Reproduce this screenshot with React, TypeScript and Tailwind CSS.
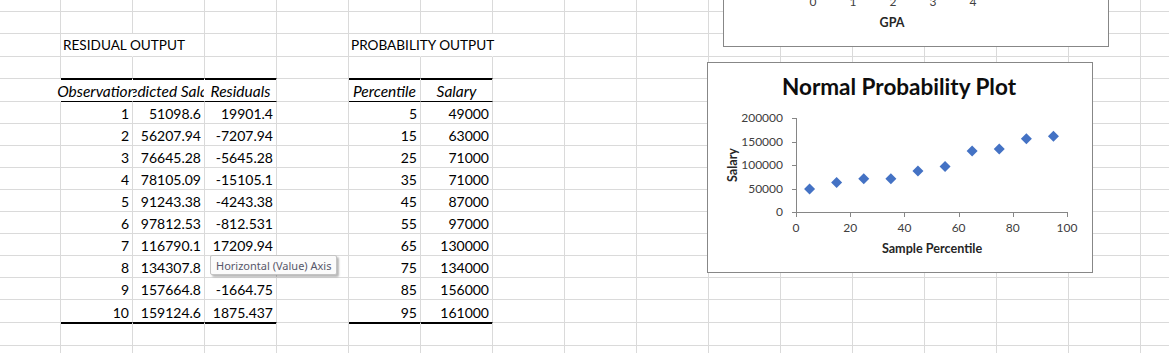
import React from "react";

// row heights follow the sheet's gridlines (y = 11, 33, 56, 78, 101 ...)
const ROW_H = [12, 22, 23, 22, 23, 22, 22, 22, 22, 22, 22, 22, 22, 22, 23, 23, 20];
const COL_W = [61, 72, 72, 72, 72, 72, 72, 72, 72, 72, 72, 72, 72, 72, 72, 72, 60];

const H_CLS: Record<number, string> = {
  12: "h-[12px]",
  20: "h-[20px]",
  22: "h-[22px]",
  23: "h-[23px]",
};
const W_CLS: Record<number, string> = {
  60: "w-[60px]",
  61: "w-[61px]",
  72: "w-[72px]",
};

const RESIDUALS: [string, string, string][] = [
  ["1", "51098.6", "19901.4"],
  ["2", "56207.94", "-7207.94"],
  ["3", "76645.28", "-5645.28"],
  ["4", "78105.09", "-15105.1"],
  ["5", "91243.38", "-4243.38"],
  ["6", "97812.53", "-812.531"],
  ["7", "116790.1", "17209.94"],
  ["8", "134307.8", "-4307.8"],
  ["9", "157664.8", "-1664.75"],
  ["10", "159124.6", "1875.437"],
];

const PROBABILITY: [number, number][] = [
  [5, 49000],
  [15, 63000],
  [25, 71000],
  [35, 71000],
  [45, 87000],
  [55, 97000],
  [65, 130000],
  [75, 134000],
  [85, 156000],
  [95, 161000],
];

const TABLE_COLS = [1, 2, 3, 5, 6];

type CellSpec = {
  text?: string;
  kind?: "title" | "head" | "num";
  extra?: string;
};

function cellAt(r: number, c: number): CellSpec {
  const inTable = TABLE_COLS.includes(c);
  if (r === 2) {
    // titles spill over the empty cells to their right
    if (c === 1) return { text: "RESIDUAL OUTPUT", kind: "title", extra: "border-r-transparent overflow-visible" };
    if (c === 5) return { text: "PROBABILITY OUTPUT", kind: "title", extra: "border-r-transparent overflow-visible" };
    if (c === 6) return { extra: "border-r-transparent" };
  }
  if (r === 3 && inTable) return { extra: "border-b-black" };
  if (r === 4) {
    const heads: Record<number, string> = {
      1: "Observation",
      2: "Predicted Salary",
      3: "Residuals",
      5: "Percentile",
      6: "Salary",
    };
    if (c === 0) return { extra: "border-r-transparent" };
    if (c === 1)
      return {
        text: heads[1],
        kind: "head",
        extra: "border-b-black border-r-transparent shadow-[inset_0_1px_0_#000] overflow-visible [clip-path:inset(0_0_0_-12px)]",
      };
    if (c === 2)
      return {
        text: heads[2],
        kind: "head",
        extra: "border-b-black border-r-transparent shadow-[inset_0_1px_0_#000]",
      };
    if (inTable)
      return { text: heads[c], kind: "head", extra: "border-b-black shadow-[inset_0_1px_0_#000]" };
  }
  if (r >= 5 && r <= 14) {
    const i = r - 5;
    const last = r === 14 ? "border-b-black" : "";
    if (c >= 1 && c <= 3) return { text: RESIDUALS[i][c - 1], kind: "num", extra: last };
    if (c === 5) return { text: String(PROBABILITY[i][0]), kind: "num", extra: last };
    if (c === 6) return { text: String(PROBABILITY[i][1]), kind: "num", extra: last };
  }
  if (r === 15 && inTable) return { extra: "shadow-[inset_0_1px_0_#000]" };
  return {};
}

function Cell({ r, c }: { r: number; c: number }) {
  const spec = cellAt(r, c);
  const align =
    spec.kind === "num"
      ? "justify-end pr-[3px] pb-[1px] text-[14px]"
      : spec.kind === "head"
      ? "justify-center italic pb-[2px] text-[15.5px]"
      : spec.kind === "title"
      ? "justify-start pl-[2px] pb-[3px] text-[13.6px]"
      : "";
  return (
    <div
      className={[
        "shrink-0 flex items-end overflow-hidden whitespace-nowrap border-r border-b border-[#dadada]",
        "leading-[16px] text-black",
        W_CLS[COL_W[c]],
        align,
        spec.extra ?? "",
      ].join(" ")}
    >
      {spec.text && <span className="shrink-0">{spec.text}</span>}
    </div>
  );
}

function GpaChartTail() {
  const ticks = [0, 1, 2, 3, 4];
  return (
    <div className="absolute left-[723px] top-[-10px] w-[386px] h-[57px] border border-[#878787] bg-white">
      <svg width="384" height="55" className="block">
        {ticks.map((t) => (
          <text
            key={t}
            x={89 + t * 40}
            y={14.5}
            textAnchor="middle"
            fontSize="12"
            fill="#404040"
            fontFamily="Lato, sans-serif"
          >
            {t}
          </text>
        ))}
        <text
          x={168}
          y={35.5}
          textAnchor="middle"
          fontSize="12.5"
          fontWeight="700"
          fill="#262626"
          fontFamily="Lato, sans-serif"
        >
          GPA
        </text>
      </svg>
    </div>
  );
}

function NormalProbabilityChart() {
  const x0 = 88;
  const x1 = 359;
  const y0 = 149;
  const y1 = 55;
  const px = (p: number) => x0 + ((x1 - x0) * p) / 100;
  const py = (v: number) => y0 - ((y0 - y1) * v) / 200000;
  const yTicks = [0, 50000, 100000, 150000, 200000];
  const xTicks = [0, 20, 40, 60, 80, 100];
  const font = "Lato, sans-serif";

  return (
    <div className="absolute left-[707px] top-[62px] w-[386px] h-[211px] border border-[#878787] bg-white">
      <svg width="384" height="209" className="block">
        <text
          x={191}
          y={32}
          textAnchor="middle"
          fontSize="22.5"
          fontWeight="700"
          fill="#0d0d0d"
          fontFamily={font}
        >
          Normal Probability Plot
        </text>

        {/* axes */}
        <line x1={x0 + 0.5} y1={y1} x2={x0 + 0.5} y2={y0 + 0.5} stroke="#868686" />
        <line x1={x0} y1={y0 + 0.5} x2={x1 + 1} y2={y0 + 0.5} stroke="#868686" />

        {yTicks.map((v) => (
          <g key={v}>
            <line x1={x0 - 4} y1={Math.round(py(v)) + 0.5} x2={x0} y2={Math.round(py(v)) + 0.5} stroke="#868686" />
            <text
              x={75}
              y={py(v) + 4}
              textAnchor="end"
              fontSize="12"
              fill="#404040"
              fontFamily={font}
            >
              {v}
            </text>
          </g>
        ))}

        {xTicks.map((t) => (
          <g key={t}>
            <line
              x1={Math.round(px(t)) + 0.5}
              y1={y0}
              x2={Math.round(px(t)) + 0.5}
              y2={y0 + 5}
              stroke="#868686"
            />
            <text
              x={px(t)}
              y={169}
              textAnchor="middle"
              fontSize="12"
              fill="#404040"
              fontFamily={font}
            >
              {t}
            </text>
          </g>
        ))}

        {PROBABILITY.map(([p, v]) => {
          const cx = px(p);
          const cy = py(v);
          return (
            <polygon
              key={p}
              points={`${cx},${cy - 5.5} ${cx + 5.5},${cy} ${cx},${cy + 5.5} ${cx - 5.5},${cy}`}
              fill="#4472C4"
            />
          );
        })}

        <text
          x={224}
          y={190}
          textAnchor="middle"
          fontSize="12.6"
          fontWeight="700"
          fill="#262626"
          fontFamily={font}
        >
          Sample Percentile
        </text>
        <text
          transform="translate(29,102) rotate(-90)"
          textAnchor="middle"
          fontSize="12.5"
          fontWeight="700"
          fill="#262626"
          fontFamily={font}
        >
          Salary
        </text>
      </svg>
    </div>
  );
}

export default function App() {
  return (
    <div className="relative w-[1169px] h-[353px] overflow-hidden bg-white [font-family:Lato,'Liberation_Sans',sans-serif]">
      <div className="flex flex-col">
        {ROW_H.map((h, r) => (
          <div key={r} className={["flex shrink-0", H_CLS[h]].join(" ")}>
            {COL_W.map((_, c) => (
              <Cell key={c} r={r} c={c} />
            ))}
          </div>
        ))}
      </div>

      <GpaChartTail />
      <NormalProbabilityChart />

      {/* hover tooltip over the chart axis */}
      <div className="absolute left-[210px] top-[255px] h-[20px] px-[5px] flex items-center rounded-[2px] border border-[#c4c4c4] bg-[#fbfbfb] shadow-[2px_2px_2px_rgba(0,0,0,0.28)] text-[11px] leading-none text-[#57576a] whitespace-nowrap [font-family:'Noto_Sans',sans-serif]">
        Horizontal (Value) Axis
      </div>
    </div>
  );
}
